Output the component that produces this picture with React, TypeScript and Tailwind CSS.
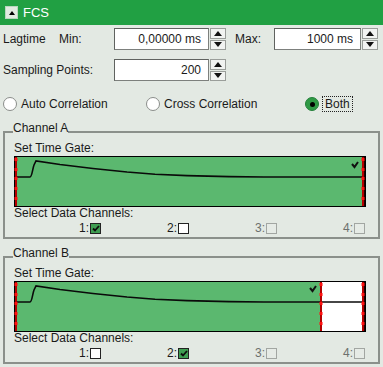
const font = { fontFamily: '"Liberation Sans", Arial, sans-serif' };

function Spin() {
  return (
    <div className="flex flex-col gap-[1px] w-[16px] h-[22px]">
      <div className="flex-1 flex items-center justify-center border border-[#9a9e9a] bg-[#f1f3f1]">
        <svg width="8" height="5" viewBox="0 0 8 5">
          <path d="M0 5 L4 0 L8 5 Z" fill="#111" />
        </svg>
      </div>
      <div className="flex-1 flex items-center justify-center border border-[#9a9e9a] bg-[#f1f3f1]">
        <svg width="8" height="5" viewBox="0 0 8 5">
          <path d="M0 0 L4 5 L8 0 Z" fill="#111" />
        </svg>
      </div>
    </div>
  );
}

function NumInput({ value, width }: { value: string; width: string }) {
  return (
    <div
      className={`${width} h-[22px] bg-white border border-[#7d807d] border-t-[#5f625f] border-l-[#5f625f] flex items-center justify-end pr-[7px] text-[12px]`}
    >
      {value}
    </div>
  );
}

function Radio({ checked }: { checked?: boolean }) {
  return checked ? (
    <div className="w-[14px] h-[14px] rounded-full bg-[#2f9a45] border border-[#24803a] flex items-center justify-center">
      <div className="w-[5px] h-[5px] rounded-full bg-black" />
    </div>
  ) : (
    <div className="w-[14px] h-[14px] rounded-full bg-white border border-[#8a8d8a]" />
  );
}

function CheckBox({ checked, disabled }: { checked?: boolean; disabled?: boolean }) {
  if (disabled)
    return <div className="w-[11px] h-[11px] border border-[#a2a6a2] bg-[#e6ebe6]" />;
  if (checked)
    return (
      <div className="w-[11px] h-[11px] border border-[#222] bg-[#3f9e52] flex items-center justify-center">
        <svg width="8" height="7" viewBox="0 0 8 7">
          <path d="M1 3.5 L3 5.5 L7 1" stroke="#0c0c0c" strokeWidth="1.8" fill="none" />
        </svg>
      </div>
    );
  return <div className="w-[11px] h-[11px] border border-[#222] bg-white" />;
}

const dots = [3, 13, 22, 32, 42];

function Marker({ x }: { x: number }) {
  return (
    <g>
      <rect x={x - 1} y={1} width={2} height={49} fill="#b40000" />
      {dots.map((d) => (
        <rect key={d} x={x - 1.5} y={d - 1} width={3} height={3} fill="#ff1010" />
      ))}
    </g>
  );
}

function Plot({ gate }: { gate?: number }) {
  const curve =
    "M1 21 L16 21 C18 21 18.5 13 20 9 L22 5 L46 8.5 L79 12.5 L113 16 L141 18.2 L173 19.6 L215 20.6 L250 21 L351 21";
  return (
    <svg width="352" height="51" viewBox="0 0 352 51" className="block">
      <rect x="0" y="0" width="352" height="51" fill="#5bb86f" />
      {gate !== undefined && (
        <rect x={gate} y="1" width={350 - gate} height="49" fill="#ffffff" />
      )}
      <path d={curve} stroke="#0a0a0a" strokeWidth="1.6" fill="none" />
      <rect x="0.5" y="0.5" width="351" height="50" fill="none" stroke="#000" />
      <rect x="1" y="1" width="2" height="49" fill="#3a0000" />
      <Marker x={2} />
      <rect x="348" y="1" width="3" height="49" fill="#200000" />
      <Marker x={349} />
      {gate !== undefined ? (
        <>
          <Marker x={gate} />
          <path d={`M${gate - 11} 7 L${gate - 8.5} 10 L${gate - 5} 5`} stroke="#111" strokeWidth="2" fill="none" />
        </>
      ) : (
        <path d="M338 8 L340.5 11 L344 6" stroke="#111" strokeWidth="2" fill="none" />
      )}
    </svg>
  );
}

function Channel({
  name,
  checkedIndex,
  gate,
}: {
  name: string;
  checkedIndex: number;
  gate?: number;
}) {
  return (
    <div className="relative mx-[3px] border-2 border-[#8b908b] pl-[9px] pr-[7px] pb-[3px]">
      <span className="absolute left-[8px] -top-[12px] leading-[14px] bg-[#e3e9e3] text-[12px]">
        {name}
      </span>
      <div className="mt-[8px] leading-[14px]">Set Time Gate:</div>
      <div className="mt-[1px]">
        <Plot gate={gate} />
      </div>
      <div className="leading-[13px]">Select Data Channels:</div>
      <div className="mt-[2px] h-[12px] grid grid-cols-4 w-[352px]">
        {[1, 2, 3, 4].map((n) => (
          <div key={n} className="flex items-center justify-end gap-[1px] pr-[1px]">
            <span className={`leading-[12px] ${n > 2 ? "text-[#6d706d]" : ""}`}>{n}:</span>
            <CheckBox checked={n === checkedIndex} disabled={n > 2} />
          </div>
        ))}
      </div>
    </div>
  );
}

export default function App() {
  return (
    <div
      style={font}
      className="w-[383px] h-[367px] bg-[#e3e9e3] text-[12px] text-[#1a1a1a] overflow-hidden"
    >
      <div className="h-[25px] bg-[#21a043] flex items-center pl-[5px]">
        <div className="w-[13px] h-[13px] bg-[#e1ebe1] border border-[#b9d6bf] flex items-center justify-center">
          <svg width="6" height="4" viewBox="0 0 6 4">
            <path d="M0 4 L3 0 L6 4 Z" fill="#000" />
          </svg>
        </div>
        <span className="ml-[5px] text-white text-[13px]">FCS</span>
      </div>

      <div className="mt-[3px] h-[22px] flex items-center pl-[3px]">
        <span className="w-[56px]">Lagtime</span>
        <span className="w-[55px]">Min:</span>
        <NumInput value="0,00000 ms" width="w-[95px]" />
        <div className="ml-[1px]">
          <Spin />
        </div>
        <span className="ml-[9px] w-[39px]">Max:</span>
        <NumInput value="1000 ms" width="w-[87px]" />
        <div className="ml-[1px]">
          <Spin />
        </div>
      </div>

      <div className="mt-[9px] h-[22px] flex items-center pl-[3px]">
        <span className="w-[111px]">Sampling Points:</span>
        <NumInput value="200" width="w-[95px]" />
        <div className="ml-[1px]">
          <Spin />
        </div>
      </div>

      <div className="mt-[16px] h-[14px] flex items-center pl-[3px]">
        <div className="w-[143px] flex items-center gap-[4px]">
          <Radio />
          <span>Auto Correlation</span>
        </div>
        <div className="w-[159px] flex items-center gap-[4px]">
          <Radio />
          <span>Cross Correlation</span>
        </div>
        <div className="flex items-center gap-[3px]">
          <Radio checked />
          <span className="border border-dotted border-[#222] px-[2px] leading-[14px]">Both</span>
        </div>
      </div>

      <div className="mt-[20px]">
        <Channel name="Channel A" checkedIndex={1} />
      </div>
      <div className="mt-[17px]">
        <Channel name="Channel B" checkedIndex={2} gate={307} />
      </div>
    </div>
  );
}
